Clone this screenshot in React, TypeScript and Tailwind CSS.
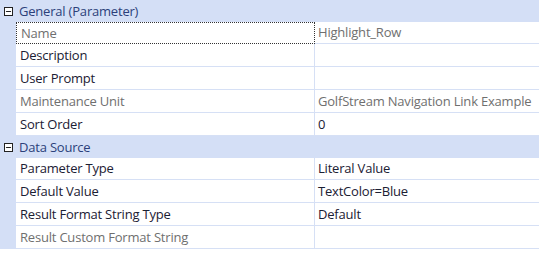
import { Minus } from "lucide-react";

type Row = { label: string; value: string; dim?: boolean; focus?: boolean };
type Section = { title: string; rows: Row[] };

const sections: Section[] = [
  {
    title: "General (Parameter)",
    rows: [
      { label: "Name", value: "Highlight_Row", dim: true, focus: true },
      { label: "Description", value: "" },
      { label: "User Prompt", value: "" },
      { label: "Maintenance Unit", value: "GolfStream Navigation Link Example", dim: true },
      { label: "Sort Order", value: "0" },
    ],
  },
  {
    title: "Data Source",
    rows: [
      { label: "Parameter Type", value: "Literal Value" },
      { label: "Default Value", value: "TextColor=Blue" },
      { label: "Result Format String Type", value: "Default" },
      { label: "Result Custom Format String", value: "", dim: true },
    ],
  },
];

function Toggle() {
  return (
    <div className="w-[9px] h-[9px] border border-[#222] bg-white flex items-center justify-center">
      <Minus className="w-[7px] h-[7px] text-[#222]" strokeWidth={4} />
    </div>
  );
}

export default function App() {
  return (
    <div
      className="w-[539px] h-[255px] bg-white text-[13px] leading-none overflow-hidden"
      style={{ fontFamily: '"Open Sans", "Noto Sans", sans-serif' }}
    >
      {sections.map((s) => (
        <div key={s.title}>
          <div className="h-[22px] bg-[#d4dff6] flex items-center">
            <div className="w-[16px] flex justify-center pl-[1px]">
              <Toggle />
            </div>
            <span className="pl-[3px] text-[#2c3f7a] tracking-[-0.2px]">{s.title}</span>
          </div>
          {s.rows.map((r, i) => (
            <div key={r.label} className={`flex ${i === 0 ? "h-[22px]" : "h-[23px]"}`}>
              <div className="w-[16px] bg-[#d4dff6] shrink-0" />
              <div
                className={`w-[299px] shrink-0 flex items-center pl-[4px] whitespace-nowrap overflow-hidden tracking-[-0.2px] ${
                  r.dim ? "text-[#6f6f6f]" : "text-[#1b2033]"
                } ${
                  r.focus
                    ? "border border-dotted border-[#333]"
                    : "border-b border-r border-[#d6e0f5]"
                }`}
              >
                {r.label}
              </div>
              <div
                className={`flex-1 flex items-center pl-[3px] whitespace-nowrap overflow-hidden border-b border-[#d6e0f5] tracking-[-0.2px] ${
                  r.dim ? "text-[#6f6f6f]" : "text-[#1b2033]"
                }`}
              >
                {r.value}
              </div>
            </div>
          ))}
        </div>
      ))}
    </div>
  );
}
